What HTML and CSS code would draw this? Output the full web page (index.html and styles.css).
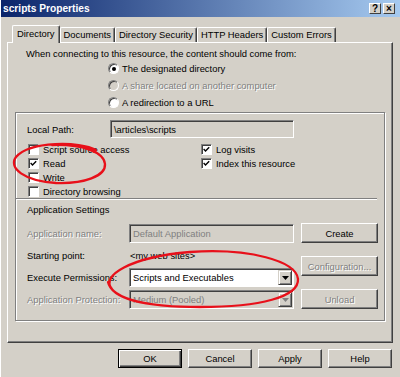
FILE: index.html
```html
<!DOCTYPE html>
<html lang="en">
<head>
    <meta charset="UTF-8">
    <title>scripts Properties</title>
    <link rel="stylesheet" href="styles.css">
</head>
<body>

<div class="window">
    <div class="titlebar">
        <span class="title">scripts Properties</span>
        <span class="caption-buttons">
            <span class="cap-btn">?</span>
            <span class="cap-btn">&#215;</span>
        </span>
    </div>

    <div class="tabs">
        <span class="tab active">Directory</span>
        <span class="tab">Documents</span>
        <span class="tab">Directory Security</span>
        <span class="tab">HTTP Headers</span>
        <span class="tab">Custom Errors</span>
    </div>

    <div class="panel">
        <p class="intro">When connecting to this resource, the content should come from:</p>

        <div class="radios">
            <div class="radio-row"><span class="radio checked"></span>The designated directory</div>
            <div class="radio-row disabled"><span class="radio"></span>A share located on another computer</div>
            <div class="radio-row"><span class="radio"></span>A redirection to a URL</div>
        </div>

        <div class="group">
            <div class="path-row">
                <span class="path-label">Local Path:</span>
                <span class="field path-field">\articles\scripts</span>
            </div>

            <div class="checks">
                <div class="check-col">
                    <div class="check-row"><span class="checkbox"></span>Script source access</div>
                    <div class="check-row"><span class="checkbox"><svg viewBox="0 0 11 11"><path d="M2 5 L4.3 7.3 L8.8 2.8"/></svg></span>Read</div>
                    <div class="check-row"><span class="checkbox"></span>Write</div>
                    <div class="check-row"><span class="checkbox"></span>Directory browsing</div>
                </div>
                <div class="check-col">
                    <div class="check-row"><span class="checkbox"><svg viewBox="0 0 11 11"><path d="M2 5 L4.3 7.3 L8.8 2.8"/></svg></span>Log visits</div>
                    <div class="check-row"><span class="checkbox"><svg viewBox="0 0 11 11"><path d="M2 5 L4.3 7.3 L8.8 2.8"/></svg></span>Index this resource</div>
                </div>
            </div>

            <div class="separator"></div>

            <div class="app-title">Application Settings</div>

            <div class="app">
                <div class="app-fields">
                    <span class="app-label disabled">Application name:</span>
                    <span class="field gray-text">Default Application</span>

                    <span class="app-label">Starting point:</span>
                    <span class="plain-value">&lt;my web sites&gt;</span>

                    <span class="app-label">Execute Permissions:</span>
                    <span class="field select white">Scripts and Executables<span class="drop"><svg viewBox="0 0 7 4"><path d="M0 0 H7 L3.5 4 Z"/></svg></span></span>

                    <span class="app-label disabled">Application Protection:</span>
                    <span class="field select gray-text">Medium (Pooled)<span class="drop off"><svg viewBox="0 0 7 4"><path d="M0 0 H7 L3.5 4 Z"/></svg></span></span>
                </div>
                <div class="app-buttons">
                    <span class="btn wide">Create</span>
                    <span class="btn wide disabled">Configuration...</span>
                    <span class="btn wide disabled">Unload</span>
                </div>
            </div>
        </div>
    </div>

    <div class="footer">
        <span class="btn default">OK</span>
        <span class="btn">Cancel</span>
        <span class="btn">Apply</span>
        <span class="btn">Help</span>
    </div>

    <!-- red marker circles drawn over the screenshot -->
    <svg class="marks" viewBox="0 0 400 377">
        <path d="M96 150 C80 141, 30 141, 16 157 C8 168, 24 181, 56 183 C84 184, 106 176, 105 164 C104 152, 82 144, 52 145"/>
        <path d="M112 289 C100 276, 130 257, 190 252 C250 248, 296 261, 298 279 C299 297, 260 307, 200 307 C150 307, 112 300, 108 282"/>
    </svg>
</div>

</body>
</html>
```

FILE: styles.css
```css
* {
    box-sizing: border-box;
}

body {
    margin: 0;
    background: #d4d0c8;
    font-family: "Liberation Sans", Arial, sans-serif;
    font-size: 9.4px;
    color: #000;
}

.window {
    position: relative;
    width: 400px;
    height: 377px;
    overflow: hidden;
    border-left: 1px solid #fff;
}

/* title bar */
.titlebar {
    height: 17px;
    margin-left: -1px;
    background: linear-gradient(to right, #0a246a, #a6caf0);
    display: flex;
    align-items: center;
    justify-content: space-between;
    padding: 0 5px 0 3px;
}

.title {
    color: #fff;
    font-weight: bold;
    font-size: 10.2px;
}

.caption-buttons {
    display: flex;
    gap: 2px;
}

.cap-btn {
    width: 12px;
    height: 11px;
    background: #d4d0c8;
    border: 1px solid;
    border-color: #fff #404040 #404040 #fff;
    font-weight: bold;
    font-size: 10px;
    line-height: 9px;
    text-align: center;
}

/* tabs */
.tabs {
    display: flex;
    align-items: flex-end;
    height: 17px;
    margin-top: 8px;
    padding-left: 11px;
}

.tab {
    height: 15px;
    padding: 0 3px;
    line-height: 13px;
    border-left: 1px solid #fff;
    border-top: 1px solid #fff;
    border-right: 1px solid #404040;
    border-radius: 2px 2px 0 0;
    box-shadow: inset -1px 0 #808080;
    white-space: nowrap;
}

.tab.active {
    height: 18px;
    margin-bottom: -1px;
    padding: 0 4px;
    line-height: 15px;
    background: #d4d0c8;
    position: relative;
    z-index: 1;
}

/* tab page */
.panel {
    margin-left: 6px;
    width: 386px;
    height: 301px;
    border-left: 1px solid #fff;
    border-top: 1px solid #fff;
    border-right: 1px solid #404040;
    border-bottom: 1px solid #404040;
    box-shadow: inset -1px -1px #808080;
}

.intro {
    margin: 4px 0 0 18px;
    line-height: 13px;
}

.radios {
    padding-left: 100px;
}

.radio-row {
    height: 17px;
    display: flex;
    align-items: center;
    gap: 3px;
}

.radio {
    width: 11px;
    height: 11px;
    border-radius: 50%;
    background: #fff;
    border: 1px solid;
    border-color: #808080 #fff #fff #808080;
    box-shadow: inset 1px 1px #404040;
    display: flex;
    align-items: center;
    justify-content: center;
}

.radio.checked::after {
    content: "";
    width: 4px;
    height: 4px;
    border-radius: 50%;
    background: #000;
}

.disabled {
    color: #808080;
    text-shadow: 1px 1px 0 #fff;
}

.radio-row.disabled .radio {
    background: #d4d0c8;
}

/* group box */
.group {
    margin: 1px 0 0 7px;
    width: 370px;
    height: 209px;
    border: 1px solid #808080;
    box-shadow: inset 1px 1px #fff, 1px 1px #fff;
}

.path-row {
    display: flex;
    align-items: center;
    margin-top: 7px;
    padding-left: 11px;
}

.path-label {
    width: 83px;
}

.field {
    height: 18px;
    display: flex;
    align-items: center;
    padding-left: 3px;
    border: 1px solid;
    border-color: #808080 #fff #fff #808080;
    box-shadow: inset 1px 1px #404040;
    white-space: nowrap;
    overflow: hidden;
}

.path-field {
    width: 184px;
}

.checks {
    display: flex;
    margin-top: 4px;
    padding-left: 12px;
}

.check-col {
    width: 173px;
}

.check-row {
    height: 14px;
    display: flex;
    align-items: center;
    gap: 4px;
}

.checkbox {
    width: 11px;
    height: 11px;
    background: #fff;
    border: 1px solid;
    border-color: #808080 #fff #fff #808080;
    box-shadow: inset 1px 1px #404040;
}

.checkbox svg {
    display: block;
    width: 9px;
    height: 9px;
    fill: none;
    stroke: #000;
    stroke-width: 1.7;
}

.separator {
    width: 361px;
    height: 2px;
    border-top: 1px solid #808080;
    border-bottom: 1px solid #fff;
}

.app-title {
    margin: 3px 0 0 11px;
    line-height: 13px;
}

.app {
    display: flex;
    align-items: flex-start;
    margin-top: 7px;
    padding-left: 11px;
}

.app-fields {
    display: grid;
    grid-template-columns: 102px 165px;
    grid-auto-rows: 19px;
    row-gap: 3px;
    align-items: center;
    margin-top: 1px;
}

.app-fields .field {
    height: 19px;
}

.gray-text {
    color: #808080;
}

.white {
    background: #fff;
}

.plain-value {
    padding-left: 1px;
}

.select {
    position: relative;
}

.drop {
    position: absolute;
    right: 1px;
    top: 1px;
    width: 14px;
    height: 15px;
    background: #d4d0c8;
    border: 1px solid;
    border-color: #d4d0c8 #404040 #404040 #d4d0c8;
    box-shadow: inset 1px 1px #fff, inset -1px -1px #808080;
    display: flex;
    align-items: center;
    justify-content: center;
}

.drop svg {
    width: 7px;
    height: 4px;
    fill: #000;
}

.drop.off svg {
    fill: #808080;
}

.app-buttons {
    display: flex;
    flex-direction: column;
    gap: 13px;
    margin-left: 7px;
}

/* push buttons */
.btn {
    width: 64px;
    height: 19px;
    display: flex;
    align-items: center;
    justify-content: center;
    background: #d4d0c8;
    border: 1px solid;
    border-color: #fff #404040 #404040 #fff;
    box-shadow: inset -1px -1px #808080;
}

.btn.wide {
    width: 77px;
    height: 20px;
}

.btn.default {
    border: 1px solid #000;
    box-shadow: inset 1px 1px #fff, inset -1px -1px #404040, inset -2px -2px #808080;
}

.footer {
    display: flex;
    justify-content: flex-end;
    gap: 6px;
    margin-top: 6px;
    padding-right: 8px;
}

.marks {
    position: absolute;
    left: -1px;
    top: 0;
    width: 400px;
    height: 377px;
    fill: none;
    stroke: #e8101a;
    stroke-width: 2.3;
    stroke-linecap: round;
    pointer-events: none;
}
```
